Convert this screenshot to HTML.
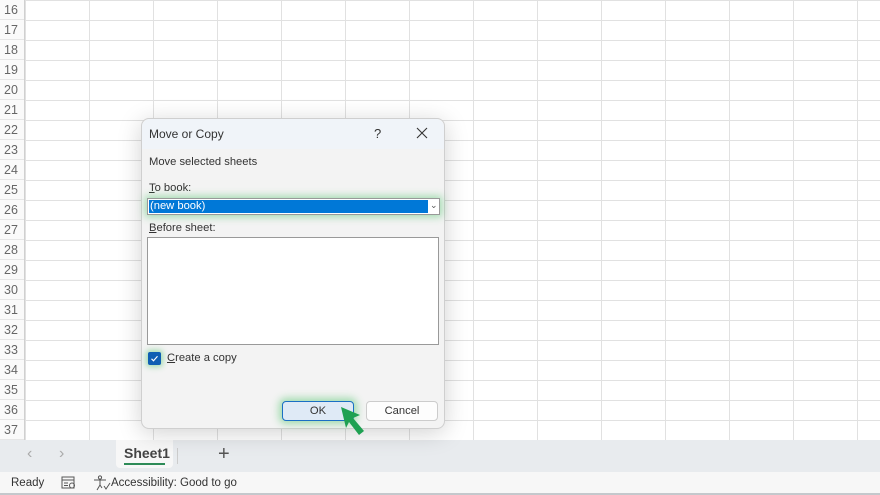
<!DOCTYPE html>
<html><head><style>
*{margin:0;padding:0;box-sizing:border-box}
body{width:880px;height:495px;overflow:hidden;background:#fff;font-family:"Liberation Sans",sans-serif;position:relative}
.grid{position:absolute;left:0;top:0;width:880px;height:440px;
background-image:linear-gradient(to right,#e1e1e1 1px,transparent 1px),linear-gradient(to bottom,#e1e1e1 1px,transparent 1px);
background-size:64px 20px,64px 20px;background-position:25px 0,0 0}
.hdr{position:absolute;left:0;top:0;width:25px;height:440px;background:#fafafa;border-right:1px solid #d0d0d0}
.hdr div{height:20px;border-bottom:1px solid #e6e6e6;font-size:12.5px;color:#666;text-align:center;line-height:21px;padding-right:2px}
.tabs{position:absolute;left:0;top:440px;width:880px;height:32px;background:#e8ebee}
.status{position:absolute;left:0;top:472px;width:880px;height:23px;background:#f7f7f7;border-bottom:2px solid #c4c8cc;font-size:11.5px;color:#333}
.dlg{position:absolute;left:141px;top:118px;width:304px;height:311px;background:#f3f3f3;border:1px solid #cfcfcf;border-radius:8px;box-shadow:0 4px 24px rgba(0,0,0,.18);font-size:11.2px;color:#333;overflow:visible}
.ttl{height:30px;background:#f0f4f9;border-radius:8px 8px 0 0;position:relative}
.abs{position:absolute}
</style></head><body>
<div class="grid"></div>
<div class="hdr">
<div>16</div><div>17</div><div>18</div><div>19</div><div>20</div><div>21</div><div>22</div><div>23</div><div>24</div><div>25</div><div>26</div><div>27</div><div>28</div><div>29</div><div>30</div><div>31</div><div>32</div><div>33</div><div>34</div><div>35</div><div>36</div><div>37</div>
</div>
<div class="tabs">
<span class="abs" style="left:27px;top:5px;color:#aaa;font-size:16px">&#x2039;</span>
<span class="abs" style="left:59px;top:5px;color:#aaa;font-size:16px">&#x203A;</span>
<div class="abs" style="left:116px;top:0;width:57px;height:28px;background:#f7f7f7;border-radius:0 0 4px 4px"></div>
<span class="abs" style="left:124px;top:5px;font-weight:bold;font-size:14px;color:#444">Sheet1</span>
<div class="abs" style="left:124px;top:23px;width:41px;height:2px;background:#2e8b57"></div>
<div class="abs" style="left:177px;top:8px;width:1px;height:16px;background:#ccc"></div>
<span class="abs" style="left:218px;top:3px;font-size:20px;color:#555">+</span>
</div>
<div class="status">
<span class="abs" style="left:11px;top:5px">Ready</span>
<svg class="abs" style="left:61px;top:4px" width="15" height="14" viewBox="0 0 15 14" fill="none" stroke="#555"><rect x="1" y="1" width="12" height="11"/><line x1="1" y1="4" x2="13" y2="4"/><line x1="3" y1="7" x2="7" y2="7"/><line x1="3" y1="9.5" x2="7" y2="9.5"/><circle cx="11" cy="9.5" r="2.5"/></svg>
<svg class="abs" style="left:93px;top:3px" width="18" height="16" viewBox="0 0 18 16" fill="none" stroke="#555"><circle cx="7" cy="2.5" r="1.6"/><path d="M1 5h12M7 5v5M7 10l-3 5M7 10l2 3M11 11l2 3 4-6"/></svg>
<span class="abs" style="left:111px;top:5px">Accessibility: Good to go</span>
</div>
<div class="dlg">
<div class="ttl">
<span class="abs" style="left:7px;top:8px;font-size:12px">Move or Copy</span>
<span class="abs" style="left:232px;top:7px;font-size:13px">?</span>
<svg class="abs" style="left:274px;top:8px" width="12" height="12" viewBox="0 0 12 12" stroke="#333" stroke-width="1.1"><path d="M1 1L11 11M11 1L1 11"/></svg>
</div>
<span class="abs" style="left:7px;top:37px">Move selected sheets</span>
<span class="abs" style="left:7px;top:63px"><u>T</u>o book:</span>
<div class="abs" style="left:5px;top:79px;width:293px;height:17px;background:#fff;border:1px solid #999;box-shadow:0 0 8px 2px rgba(60,190,90,.45)">
<div class="abs" style="left:1px;top:1px;width:279px;height:13px;background:#0078d7;color:#fff;line-height:13px;padding-left:1px;outline:1px dotted #fff">(new book)</div>
<span class="abs" style="left:282px;top:1px;font-size:9px;color:#555">&#x2304;</span>
</div>
<span class="abs" style="left:7px;top:103px"><u>B</u>efore sheet:</span>
<div class="abs" style="left:5px;top:118px;width:292px;height:108px;background:#fff;border:1px solid #999"></div>
<div class="abs" style="left:6px;top:233px;width:13px;height:13px;background:#0f5fb3;border-radius:2px;box-shadow:0 0 6px 2px rgba(60,190,90,.45)">
<svg width="13" height="13" viewBox="0 0 13 13" fill="none" stroke="#fff" stroke-width="1.1"><path d="M3.5 6.8l2 2 4-4.5"/></svg></div>
<span class="abs" style="left:25px;top:233px"><u>C</u>reate a copy</span>
<div class="abs" style="left:140px;top:282px;width:72px;height:20px;background:#dfeaf6;border:1px solid #1a6fc4;border-radius:4px;text-align:center;line-height:18px;box-shadow:0 0 8px 3px rgba(60,190,90,.45)">OK</div>
<div class="abs" style="left:224px;top:282px;width:72px;height:20px;background:#fdfdfd;border:1px solid #ccc;border-radius:4px;text-align:center;line-height:18px">Cancel</div>
</div>
<svg class="abs" style="left:338px;top:405px" width="30" height="34" viewBox="0 0 30 34"><path d="M3 2L22 10L15 13L26 26L21 30L11 17L8 23Z" fill="#1fa152"/></svg>
</body></html>
